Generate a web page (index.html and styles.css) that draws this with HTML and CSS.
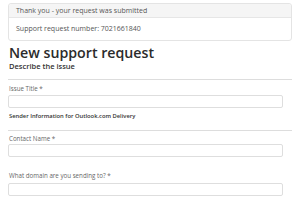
FILE: index.html
```html
<!DOCTYPE html>
<html lang="en">
<head>
<meta charset="utf-8">
<title>New support request</title>
<link rel="stylesheet" href="styles.css">
</head>
<body>
<div class="page">
  <div class="alert">
    <div class="alert-head">Thank you - your request was submitted</div>
    <div class="alert-body">Support request number: 7021661840</div>
  </div>
  <h1 class="title">New support request</h1>
  <div class="section">Describe the issue</div>
  <hr class="rule rule-first">
  <div class="field field-first">
    <label class="label">Issue Title *</label>
    <div class="input"></div>
  </div>
  <div class="subsection">Sender Information for Outlook.com Delivery</div>
  <hr class="rule rule-second">
  <div class="field field-contact">
    <label class="label">Contact Name *</label>
    <div class="input input-contact"></div>
  </div>
  <div class="field field-domain">
    <label class="label label-domain">What domain are you sending to? *</label>
    <div class="input input-domain"></div>
  </div>
</div>
</body>
</html>
```

FILE: styles.css
```css
html, body {
  margin: 0;
  padding: 0;
  background: #ffffff;
}
body {
  font-family: "Open Sans", "DejaVu Sans", sans-serif;
  color: #555555;
}
.page {
  padding: 3px 8px 0 8px;
}
.alert {
  border: 1px solid #e4e4e4;
  border-radius: 3px;
  background: #ffffff;
}
.alert-head {
  background: #f5f5f5;
  border-bottom: 1px solid #e6e6e6;
  border-radius: 3px 3px 0 0;
  height: 13px;
  line-height: 13px;
  padding: 0 7px;
  font-size: 7px;
  color: #555555;
}
.alert-body {
  height: 22px;
  line-height: 22px;
  padding: 0 7px;
  font-size: 7px;
  color: #555555;
}
.title {
  margin: 4px 0 0 1px;
  font-size: 14.2px;
  line-height: 16px;
  font-weight: 600;
  color: #2b2b2b;
}
.section {
  margin: 1px 0 0 1px;
  font-size: 7.5px;
  line-height: 9px;
  font-weight: 600;
  color: #333333;
}
.rule {
  border: 0;
  border-top: 1px solid #dddddd;
  margin: 0;
  height: 0;
}
.rule-first {
  margin-top: 8px;
}
.field {
  display: flex;
  flex-direction: column;
  margin-right: 9px;
}
.field-first {
  margin-top: 4px;
}
.label {
  font-size: 6.2px;
  line-height: 9px;
  color: #666666;
  margin-left: 1px;
}
.input {
  height: 11px;
  border: 1px solid #dedede;
  border-radius: 2px;
  margin-top: 2px;
  background: #ffffff;
}
.subsection {
  margin: 4px 0 0 1px;
  font-size: 5.8px;
  line-height: 9px;
  font-weight: 600;
  color: #333333;
}
.rule-second {
  margin-top: 9px;
}
.field-contact {
  margin-top: 3px;
}
.input-contact {
  margin-top: 1px;
}
.field-domain {
  margin-top: 14px;
}
.input-domain {
  margin-top: 3px;
}
```
